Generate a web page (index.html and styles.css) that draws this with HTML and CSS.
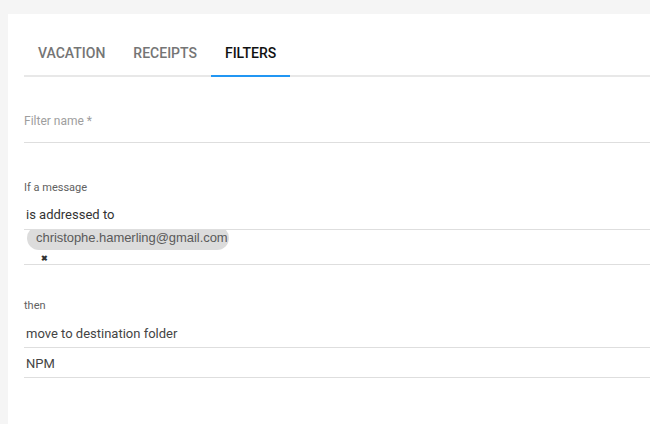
FILE: index.html
```html
<!DOCTYPE html>
<html lang="en">
<head>
    <meta charset="UTF-8">
    <meta name="viewport" content="width=device-width, initial-scale=1.0">
    <title>Settings - Filters</title>
    <link rel="stylesheet" href="styles.css">
</head>
<body>
    <div class="card">
        <!-- Tabs -->
        <div class="tabs">
            <div class="tab">Vacation</div>
            <div class="tab">Receipts</div>
            <div class="tab active">Filters</div>
        </div>

        <!-- Filter name -->
        <div class="text-field">
            <span class="placeholder">Filter name *</span>
        </div>

        <!-- Condition -->
        <div class="group-label first">If a message</div>
        <div class="select">is addressed to</div>
        <div class="chips">
            <div class="chip">christophe.hamerling@gmail.com</div>
            <span class="chip-remove">&#x2716;</span>
        </div>

        <!-- Action -->
        <div class="group-label second">then</div>
        <div class="select action">move to destination folder</div>
        <div class="select folder">NPM</div>
    </div>
</body>
</html>
```

FILE: styles.css
```css
body {
    margin: 0;
    padding: 14px 0 0 8px;
    background-color: #f5f5f5;
    font-family: Roboto, "Liberation Sans", Arial, sans-serif;
    overflow: hidden;
}
.card {
    background-color: #fff;
    height: 410px;
    padding: 14px 0 0 16px;
    box-sizing: border-box;
}
.tabs {
    display: flex;
    border-bottom: 2px solid #e8e8e8;
}
.tab {
    padding: 17px 14px 13px;
    line-height: 17px;
    font-size: 14px;
    font-weight: 500;
    text-transform: uppercase;
    color: #757575;
    margin-bottom: -2px;
    border-bottom: 2px solid transparent;
}
.tab.active {
    color: #111;
    border-bottom-color: #2196f3;
}
.text-field {
    height: 66px;
    padding-top: 37px;
    box-sizing: border-box;
    border-bottom: 1px solid #dedede;
}
.placeholder {
    display: block;
    font-size: 12px;
    line-height: 14px;
    color: #9e9e9e;
}
.group-label {
    font-size: 11px;
    line-height: 13px;
    color: #616161;
}
.group-label.first {
    margin-top: 38px;
}
.group-label.second {
    margin-top: 34px;
}
.select {
    padding: 13px 0 6px 2px;
    font-size: 13px;
    line-height: 16px;
    color: #333;
    border-bottom: 1px solid #dedede;
}
.select.action {
    padding-top: 14px;
    padding-bottom: 5px;
    color: #444;
}
.select.folder {
    padding-top: 8px;
    padding-bottom: 5px;
    color: #444;
}
.chips {
    display: flex;
    flex-direction: column;
    align-items: flex-start;
    height: 34px;
    overflow: hidden;
    border-bottom: 1px solid #dedede;
}
.chip {
    margin: -4px 0 0 3px;
    height: 24px;
    line-height: 24px;
    padding: 0 1px 0 9px;
    border-radius: 12px;
    background-color: #dcdcdc;
    font-family: "Liberation Sans", Arial, sans-serif;
    font-size: 13px;
    letter-spacing: -0.05px;
    color: #5a5a5a;
}
.chip-remove {
    margin: 5px 0 0 17px;
    font-size: 8px;
    font-weight: bold;
    line-height: 8px;
    color: #333;
}
```
